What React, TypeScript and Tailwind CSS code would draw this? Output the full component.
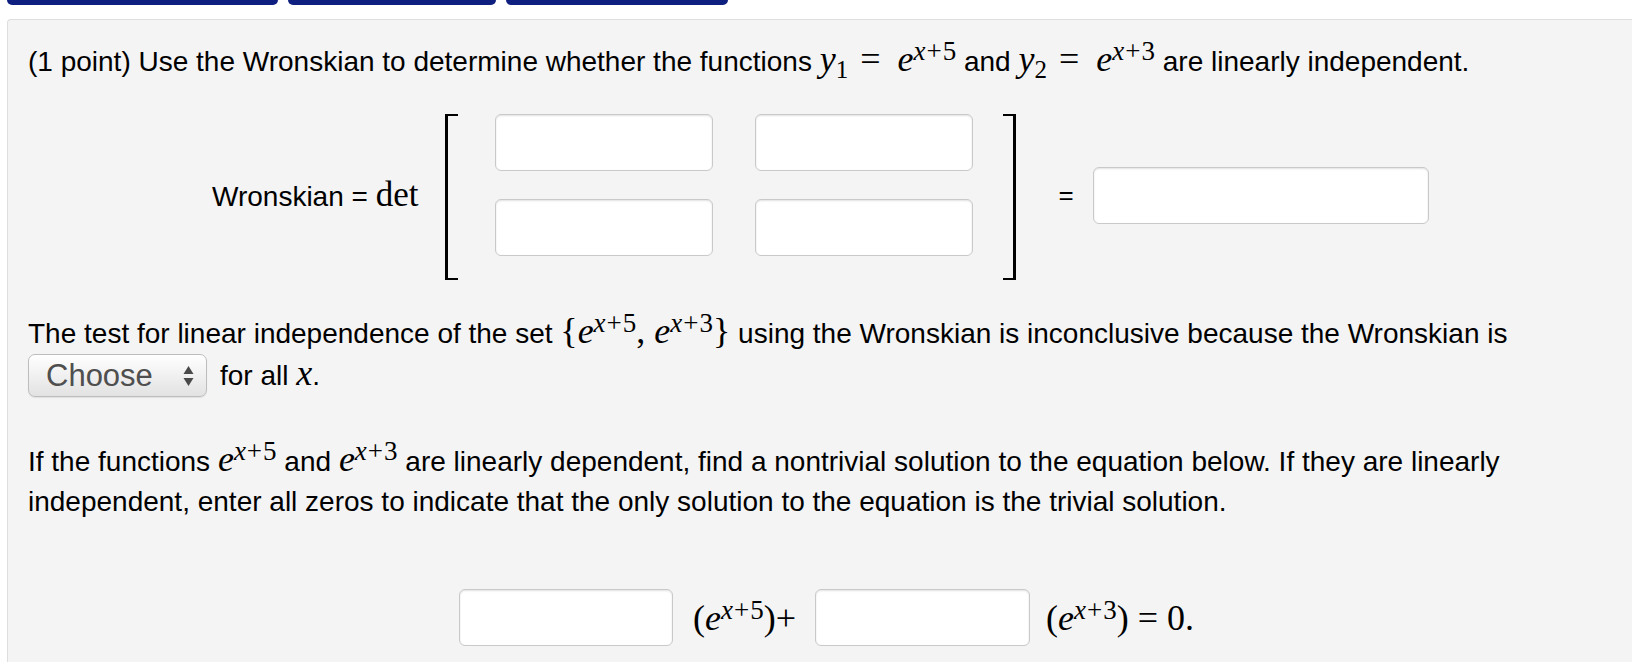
import React from "react"

const serif = "font-['Liberation_Serif',serif]"

function Exp({ p }: { p: string }) {
  return (
    <span className={`${serif} text-[36px] leading-[0]`}>
      <i>e</i>
      <span className="relative -top-[11px] text-[27px]">
        <i>x</i>
        <span className="mx-[1px]">+</span>
        {p}
      </span>
    </span>
  )
}

function Y({ n }: { n: string }) {
  return (
    <span className={`${serif} text-[36px] leading-[0]`}>
      <i>y</i>
      <span className="relative top-[7px] text-[25px]">{n}</span>
    </span>
  )
}

function Eq() {
  return <span className={`${serif} text-[36px] leading-[0] ml-[12px] mr-[17px]`}>=</span>
}

function Box({ w }: { w: string }) {
  return (
    <div
      className={`${w} h-[57px] bg-white border border-[#c9c9c9] rounded-[6px] shadow-[inset_0_1px_2px_rgba(0,0,0,0.12)]`}
    />
  )
}

export default function App() {
  return (
    <div className="h-screen overflow-hidden flex flex-col bg-white text-black font-['Liberation_Sans',Arial,sans-serif] text-[28px]">
      {/* top tabs */}
      <div className="flex gap-[10px] pl-[7px]">
        <div className="w-[271px] h-[5px] bg-[#0f1f80] rounded-b-[5px]" />
        <div className="w-[208px] h-[5px] bg-[#0f1f80] rounded-b-[5px]" />
        <div className="w-[222px] h-[5px] bg-[#0f1f80] rounded-b-[5px]" />
      </div>

      <div className="flex-1 mt-[14px] ml-[7px] bg-[#f4f4f4] border-t border-l border-[#dedede] rounded-tl-[4px] pl-[20px] pt-[22px]">
        <div className="leading-[40px] whitespace-nowrap">
          (1 point) Use the Wronskian to determine whether the functions <Y n="1" />
          <Eq />
          <Exp p="5" /> and <Y n="2" />
          <Eq />
          <Exp p="3" /> are linearly independent.
        </div>

        {/* matrix row */}
        <div className="mt-[32px] pl-[184px] flex items-center">
          <div className="whitespace-nowrap leading-[40px]">
            Wronskian = <span className={`${serif} text-[35px] leading-[0]`}>det</span>
          </div>
          <div className="ml-[27px] flex items-start">
            <div className="w-[13px] h-[166px] border-l-[3px] border-y-2 border-black" />
            <div className="ml-[37px] grid grid-cols-2 gap-x-[42px] gap-y-[28px]">
              <Box w="w-[218px]" />
              <Box w="w-[218px]" />
              <Box w="w-[218px]" />
              <Box w="w-[218px]" />
            </div>
            <div className="ml-[30px] w-[13px] h-[166px] border-r-[3px] border-y-2 border-black" />
          </div>
          <div className="ml-[42px] text-[26px] leading-[30px] -mt-[4px]">=</div>
          <div className="ml-[19px] -mt-[3px]">
            <Box w="w-[336px]" />
          </div>
        </div>

        {/* inconclusive */}
        <div className="mt-[34px] leading-[40px] whitespace-nowrap">
          The test for linear independence of the set{" "}
          <span className={`${serif} text-[36px] leading-[0]`}>
            {"{"}
            <Exp p="5" />, <Exp p="3" />
            {"}"}
          </span>{" "}
          using the Wronskian is inconclusive because the Wronskian is
        </div>
        <div className="flex items-center h-[43px]">
          <div className="w-[179px] h-[43px] flex items-center justify-between pl-[17px] pr-[12px] rounded-[7px] border border-[#bdbdbd] bg-gradient-to-b from-white to-[#e2e2e2] shadow-[0_1px_1px_rgba(0,0,0,0.08)] text-[#4f4f4f] text-[31px] leading-none">
            <span>Choose</span>
            <svg width="11" height="22" viewBox="0 0 11 22">
              <path d="M5.5 1 L10.5 9 L0.5 9 Z" fill="#4a4a4a" />
              <path d="M5.5 21 L10.5 13 L0.5 13 Z" fill="#4a4a4a" />
            </svg>
          </div>
          <div className="ml-[13px] whitespace-nowrap">
            for all <span className={`${serif} italic text-[36px] leading-[0]`}>x</span>.
          </div>
        </div>

        {/* dependent */}
        <div className="mt-[45px] leading-[40px] whitespace-nowrap">
          <div>
            If the functions <Exp p="5" /> and <Exp p="3" /> are linearly dependent, find a nontrivial solution to the
            equation below. If they are linearly
          </div>
          <div>
            independent, enter all zeros to indicate that the only solution to the equation is the trivial solution.
          </div>
        </div>

        {/* equation */}
        <div className="mt-[67px] pl-[431px] flex items-center">
          <Box w="w-[214px]" />
          <div className={`ml-[20px] ${serif} text-[36px] leading-[40px] whitespace-nowrap`}>
            (<Exp p="5" />)+
          </div>
          <div className="ml-[19px]">
            <Box w="w-[215px]" />
          </div>
          <div className={`ml-[16px] ${serif} text-[36px] leading-[40px] whitespace-nowrap`}>
            (<Exp p="3" />) = 0.
          </div>
        </div>
      </div>
    </div>
  )
}
